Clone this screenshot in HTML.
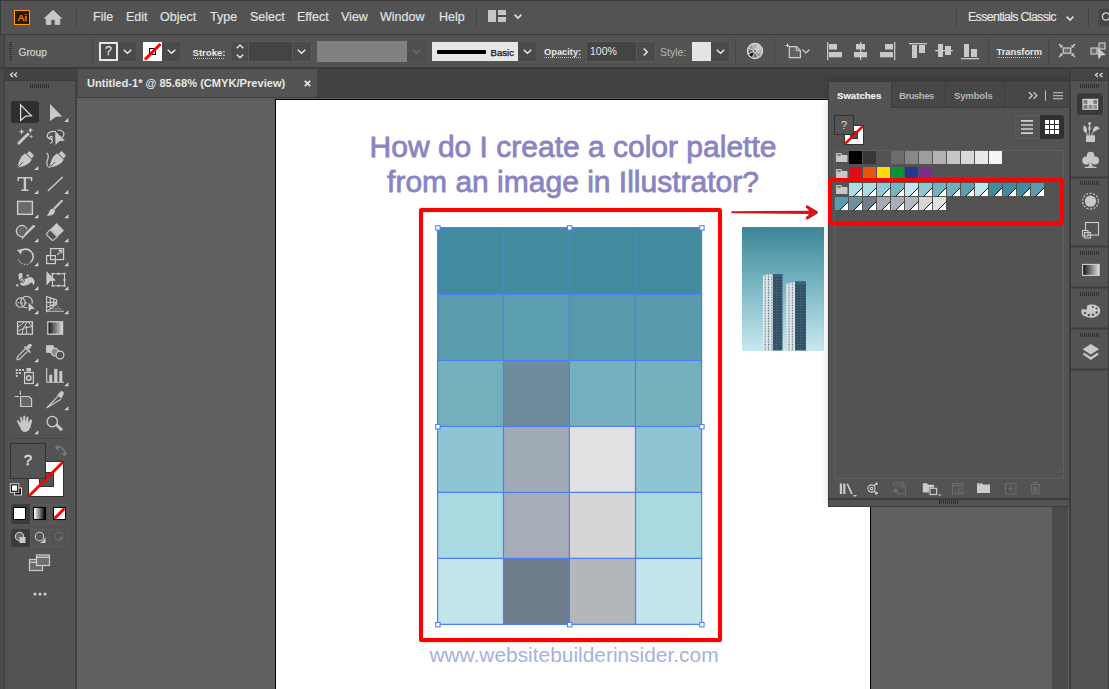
<!DOCTYPE html>
<html><head><meta charset="utf-8">
<style>
*{margin:0;padding:0;box-sizing:border-box}
html,body{width:1109px;height:689px;overflow:hidden;background:#535353;font-family:"Liberation Sans",sans-serif}
.a{position:absolute}
.mt{position:absolute;top:9px;font-size:12.5px;color:#e4e4e4;line-height:16px;white-space:nowrap;-webkit-text-stroke:0.15px #e4e4e4}
.sep{position:absolute;width:1px;background:#454545}
svg{position:absolute;overflow:visible}
</style></head><body>
<!-- frame borders -->
<div class="a" style="left:0;top:0;width:1109px;height:1px;background:#3a3a3a"></div>
<div class="a" style="left:0;top:0;width:1px;height:689px;background:#3a3a3a"></div>

<!-- MENU BAR -->
<div class="a" id="menubar" style="left:1px;top:1px;width:1108px;height:33px;background:#535353"></div>
<div class="a" style="left:0;top:34px;width:1109px;height:1px;background:#3c3c3c"></div>


<!-- menu content -->
<div class="a" style="left:14px;top:10px;width:16px;height:15px;background:#2b1600;border:1px solid #ff9a00"></div>
<div class="a" style="left:14.5px;top:10px;width:16px;height:15px;color:#ff9a00;font-size:9.8px;line-height:15.5px;text-align:center;letter-spacing:0.4px;-webkit-text-stroke:0.25px #ff9a00">Ai</div>
<svg style="left:40px;top:5px" width="26" height="24" viewBox="40 5 26 24"><path d="M53 10.3 L61.6 18.3 H59.8 V24.4 H55.1 V19.5 H50.9 V24.4 H46.2 V18.3 H44.4 Z" fill="#c8c8c8" stroke="#c8c8c8" stroke-width="0.8" stroke-linejoin="round"/></svg>
<div class="sep" style="left:76px;top:7px;height:20px"></div>
<div class="mt" style="left:93px">File</div>
<div class="mt" style="left:126px">Edit</div>
<div class="mt" style="left:160px">Object</div>
<div class="mt" style="left:210px">Type</div>
<div class="mt" style="left:250px">Select</div>
<div class="mt" style="left:297px">Effect</div>
<div class="mt" style="left:341px">View</div>
<div class="mt" style="left:380px">Window</div>
<div class="mt" style="left:439px">Help</div>
<div class="sep" style="left:476px;top:7px;height:20px"></div>
<svg style="left:488px;top:10px" width="18" height="12" viewBox="0 0 18 12"><rect x="0" y="0" width="8" height="12" fill="#c6c6c6"/><rect x="10" y="0" width="8" height="5" fill="#c6c6c6"/><rect x="10" y="7" width="8" height="5" fill="#c6c6c6"/></svg>
<svg style="left:514px;top:14px" width="8" height="5" viewBox="0 0 8 5"><path d="M0.6 0.6 L4 4 L7.4 0.6" fill="none" stroke="#e0e0e0" stroke-width="1.6"/></svg>
<div class="sep" style="left:956px;top:7px;height:20px"></div>
<div class="mt" style="left:968px;letter-spacing:-0.72px">Essentials Classic</div>
<svg style="left:1066px;top:16px" width="8" height="5" viewBox="0 0 8 5"><path d="M0.6 0.6 L4 4 L7.4 0.6" fill="none" stroke="#e0e0e0" stroke-width="1.6"/></svg>
<div class="sep" style="left:1088px;top:7px;height:20px"></div>
<div class="a" style="left:1098px;top:8px;width:20px;height:19px;background:#454545;border:1px solid #4d4d4d;border-radius:3px"></div>
<svg style="left:1101px;top:12px" width="10" height="10" viewBox="0 0 10 10"><circle cx="5" cy="4.5" r="3.6" fill="none" stroke="#d0d0d0" stroke-width="1.3"/><path d="M7.5 7 L10 9.5" stroke="#d0d0d0" stroke-width="1.5"/></svg>

<!-- CONTROL BAR -->
<div class="a" style="left:0;top:35px;width:4px;height:654px;background:#4a4a4a"></div>
<div class="a" style="left:4px;top:35px;width:1105px;height:33px;background:#535353;border-left:1px solid #3c3c3c"></div>
<div class="a" style="left:0;top:67px;width:1109px;height:2px;background:#3c3c3c"></div>


<!-- control content -->
<svg style="left:9px;top:42px" width="3" height="19" viewBox="0 0 3 19"><path d="M0 0.5h3M0 2.5h3M0 4.5h3M0 6.5h3M0 8.5h3M0 10.5h3M0 12.5h3M0 14.5h3M0 16.5h3M0 18.5h3" stroke="#333" stroke-width="1"/></svg>
<div class="a" style="left:18.5px;top:46.5px;font-size:10.2px;line-height:12px;color:#cfcfcf;-webkit-text-stroke:0.25px #cfcfcf">Group</div>
<div class="sep" style="left:92px;top:39px;height:25px;background:#474747"></div>
<!-- fill group -->
<div class="a" style="left:98px;top:41px;width:39px;height:21px;background:#4a4a4a;border:1px solid #565656;border-radius:3px"></div>
<div class="a" style="left:99px;top:42px;width:19px;height:19px;background:#4a4a4a;border:2px solid #e6e6e6"></div>
<div class="a" style="left:99px;top:42px;width:19px;height:19px;color:#dcdcdc;font-size:12.5px;line-height:19px;text-align:center;-webkit-text-stroke:0.3px #dcdcdc">?</div>
<svg style="left:123px;top:49px" width="9" height="5" viewBox="0 0 9 5"><path d="M0.7 0.7 L4.5 4.3 L8.3 0.7" fill="none" stroke="#e8e8e8" stroke-width="1.5"/></svg>
<!-- stroke group -->
<div class="a" style="left:142px;top:41px;width:39px;height:21px;background:#4a4a4a;border:1px solid #565656;border-radius:3px"></div>
<div class="a" style="left:143px;top:42px;width:19px;height:19px;background:#fff"></div>
<div class="a" style="left:149px;top:48px;width:7px;height:7px;border:1px solid #000"></div>
<svg style="left:143px;top:42px" width="19" height="19" viewBox="0 0 19 19"><path d="M2 17.5 L17.5 2" stroke="#ff0000" stroke-width="3"/></svg>
<svg style="left:167px;top:49px" width="9" height="5" viewBox="0 0 9 5"><path d="M0.7 0.7 L4.5 4.3 L8.3 0.7" fill="none" stroke="#e8e8e8" stroke-width="1.5"/></svg>
<!-- stroke label -->
<div class="a" style="left:192.5px;top:46.5px;font-size:9.6px;line-height:12px;color:#e8e8e8;font-weight:bold">Stroke:</div>
<div class="a" style="left:193px;top:58px;width:31px;height:1px;background-image:linear-gradient(90deg,#bbb 50%,transparent 50%);background-size:2px 1px"></div>
<!-- stepper -->
<div class="a" style="left:230px;top:41px;width:82px;height:21px;background:#4b4b4b;border:1px solid #5a5a5a;border-radius:3px"></div>
<div class="a" style="left:248px;top:42px;width:45px;height:19px;background:#444;border-left:1px solid #5a5a5a;border-right:1px solid #5a5a5a"></div>
<svg style="left:236px;top:44px" width="8" height="15" viewBox="0 0 8 15"><path d="M0.7 4.2 L4 0.9 L7.3 4.2 M0.7 10.5 L4 13.8 L7.3 10.5" fill="none" stroke="#e8e8e8" stroke-width="1.4"/></svg>
<svg style="left:297px;top:49px" width="9" height="5" viewBox="0 0 9 5"><path d="M0.7 0.7 L4.5 4.3 L8.3 0.7" fill="none" stroke="#e8e8e8" stroke-width="1.5"/></svg>
<!-- profile (disabled) -->
<div class="a" style="left:317px;top:41px;width:109px;height:21px;background:#4f4f4f;border-radius:2px"></div>
<div class="a" style="left:317px;top:41px;width:90px;height:21px;background:#808080"></div>
<svg style="left:412px;top:49px" width="9" height="5" viewBox="0 0 9 5"><path d="M0.7 0.7 L4.5 4.3 L8.3 0.7" fill="none" stroke="#6a6a6a" stroke-width="1.5"/></svg>
<!-- brush -->
<div class="a" style="left:432px;top:41px;width:105px;height:21px;background:#4a4a4a;border:1px solid #565656;border-radius:3px"></div>
<div class="a" style="left:432px;top:42px;width:86px;height:19px;background:#e6e6e6"></div>
<div class="a" style="left:436.7px;top:50px;width:49.5px;height:3.5px;background:#000;border-radius:1px"></div>
<div class="a" style="left:490.5px;top:46.5px;font-size:9.6px;line-height:12px;color:#111;-webkit-text-stroke:0.25px #111">Basic</div>
<svg style="left:523px;top:49px" width="9" height="5" viewBox="0 0 9 5"><path d="M0.7 0.7 L4.5 4.3 L8.3 0.7" fill="none" stroke="#e8e8e8" stroke-width="1.5"/></svg>
<!-- opacity -->
<div class="a" style="left:544px;top:45.5px;font-size:9.3px;line-height:12px;color:#e8e8e8;font-weight:bold">Opacity:</div>
<div class="a" style="left:544px;top:57px;width:37px;height:1px;background-image:linear-gradient(90deg,#bbb 50%,transparent 50%);background-size:2px 1px"></div>
<div class="a" style="left:586px;top:41px;width:70px;height:21px;background:#4b4b4b;border:1px solid #5a5a5a;border-radius:3px"></div>
<div class="a" style="left:587px;top:42px;width:50px;height:19px;background:#444;border-right:1px solid #5a5a5a"></div>
<div class="a" style="left:590px;top:45px;font-size:10.5px;line-height:12px;color:#e8e8e8">100%</div>
<svg style="left:643px;top:48px" width="5" height="8" viewBox="0 0 5 8"><path d="M0.7 0.5 L4.3 4 L0.7 7.5" fill="none" stroke="#e8e8e8" stroke-width="1.5"/></svg>
<!-- style -->
<div class="a" style="left:660px;top:46px;font-size:10.5px;line-height:12px;color:#b9b9b9">Style:</div>
<div class="a" style="left:691px;top:41px;width:39px;height:21px;background:#4a4a4a;border:1px solid #565656;border-radius:3px"></div>
<div class="a" style="left:692px;top:42px;width:19px;height:19px;background:#e4e4e4"></div>
<svg style="left:716px;top:49px" width="9" height="5" viewBox="0 0 9 5"><path d="M0.7 0.7 L4.5 4.3 L8.3 0.7" fill="none" stroke="#e8e8e8" stroke-width="1.5"/></svg>
<div class="sep" style="left:735px;top:39px;height:25px;background:#474747"></div>
<!-- recolor -->
<svg style="left:746px;top:43px" width="18" height="18" viewBox="0 0 18 18">
<path d="M9 8 L6.24 1.35 A7.2 7.2 0 0 1 11.76 1.35 Z" fill="#acacac" stroke="#d2d2d2" stroke-width="0.8"/><path d="M9 8 L11.76 1.35 A7.2 7.2 0 0 1 15.65 5.24 Z" fill="#c9c9c9" stroke="#d2d2d2" stroke-width="0.8"/><path d="M9 8 L15.65 5.24 A7.2 7.2 0 0 1 15.65 10.76 Z" fill="#b6b6b6" stroke="#d2d2d2" stroke-width="0.8"/><path d="M9 8 L15.65 10.76 A7.2 7.2 0 0 1 11.76 14.65 Z" fill="#9b9b9b" stroke="#d2d2d2" stroke-width="0.8"/><path d="M9 8 L11.76 14.65 A7.2 7.2 0 0 1 6.24 14.65 Z" fill="#707070" stroke="#d2d2d2" stroke-width="0.8"/><path d="M9 8 L6.24 14.65 A7.2 7.2 0 0 1 2.35 10.76 Z" fill="#141414" stroke="#d2d2d2" stroke-width="0.8"/><path d="M9 8 L2.35 10.76 A7.2 7.2 0 0 1 2.35 5.24 Z" fill="#6a6a6a" stroke="#d2d2d2" stroke-width="0.8"/><path d="M9 8 L2.35 5.24 A7.2 7.2 0 0 1 6.24 1.35 Z" fill="#9a9a9a" stroke="#d2d2d2" stroke-width="0.8"/>
<circle cx="9" cy="8" r="7.6" fill="none" stroke="#d6d6d6" stroke-width="1.2"/>
<circle cx="9" cy="8" r="1.8" fill="#777" stroke="#d8d8d8" stroke-width="1"/></svg>
<div class="sep" style="left:774px;top:39px;height:25px;background:#474747"></div>
<!-- doc -->
<svg style="left:785px;top:43px" width="26" height="16" viewBox="0 0 26 16">
<path d="M0.5 2.5h3.5M2.5 0.5v3.5" stroke="#cfcfcf" stroke-width="1"/>
<path d="M4.3 3.6 H11.5 L15.4 7.5 V14.6 H4.3 Z" fill="#626262" stroke="#cfcfcf" stroke-width="1.2"/>
<path d="M11.3 3.8 V7.7 H15.2" fill="none" stroke="#cfcfcf" stroke-width="1"/>
<path d="M17.5 6.5 L21 10 L24.5 6.5" fill="none" stroke="#cfcfcf" stroke-width="1.2"/></svg>
<!-- align -->
<svg style="left:826px;top:42px" width="154" height="19" viewBox="826 42 154 19" fill="#c8c8c8">
<rect x="827" y="42" width="1.3" height="18"/><rect x="829" y="44" width="8" height="5.5"/><rect x="829" y="52" width="13" height="5.3"/>
<rect x="860" y="42" width="1.3" height="18"/><rect x="856" y="44" width="9" height="5.5"/><rect x="854" y="52" width="13" height="5.3"/>
<rect x="894" y="42" width="1.3" height="18"/><rect x="885" y="44" width="8" height="5.5"/><rect x="880" y="52" width="13" height="5.3"/>
<rect x="909" y="43" width="18" height="1.3"/><rect x="912" y="45" width="5" height="13"/><rect x="919" y="45" width="6" height="8"/>
<rect x="935" y="50" width="18" height="1.3"/><rect x="938" y="44" width="5" height="13"/><rect x="945" y="46" width="6" height="9"/>
<rect x="961" y="58" width="18" height="1.3"/><rect x="964" y="44" width="5" height="13"/><rect x="971" y="49" width="6" height="8"/>
</svg>
<div class="sep" style="left:988px;top:39px;height:25px;background:#474747"></div>
<div class="a" style="left:996.5px;top:45.5px;font-size:9.3px;line-height:12px;color:#e8e8e8;font-weight:bold">Transform</div>
<div class="a" style="left:997px;top:57px;width:44px;height:1px;background-image:linear-gradient(90deg,#bbb 50%,transparent 50%);background-size:2px 1px"></div>
<div class="sep" style="left:1048px;top:39px;height:25px;background:#474747"></div>
<svg style="left:1058px;top:43px" width="18" height="15" viewBox="0 0 18 15">
<rect x="5.2" y="5" width="7.6" height="5.2" fill="#6a6a6a" stroke="#cfcfcf" stroke-width="1.2"/>
<path d="M1 1 L4 4 M17 1 L14 4 M1 14 L4 11 M17 14 L14 11" stroke="#cfcfcf" stroke-width="1.3"/>
<path d="M4.5 1.5v3h-3z M13.5 1.5v3h3z M4.5 13.5v-3h-3z M13.5 13.5v-3h3z" fill="#cfcfcf"/></svg>
<svg style="left:1090px;top:42px" width="20" height="18" viewBox="0 0 20 18">
<rect x="1" y="6" width="6" height="6" fill="#6a6a6a" stroke="#cfcfcf" stroke-width="1.1"/>
<rect x="9" y="1" width="6" height="6" fill="#6a6a6a" stroke="#cfcfcf" stroke-width="1.1"/>
<path d="M7 5 L16 13 L11.5 13.5 L8.5 17.5 Z" fill="#c8c8c8"/></svg>

<!-- LEFT TOOLS PANEL -->
<div class="a" style="left:4px;top:69px;width:73px;height:620px;background:#535353;border-left:1px solid #3c3c3c;border-right:2px solid #3f3f3f"></div>
<div class="a" style="left:5px;top:69px;width:70px;height:12px;background:#434343;border-bottom:1px solid #3c3c3c"></div>


<!-- tools content -->
<svg style="left:0;top:60px" width="80" height="560" viewBox="0 60 80 560">
<g fill="none" stroke="#d2d2d2" stroke-width="1.2">
<path d="M13 72.5 L10.5 74.7 L13 77 M17 72.5 L14.5 74.7 L17 77" stroke="#d8d8d8" stroke-width="1.4"/>
</g>
<path d="M30.5 84v4M32.5 84v4M34.5 84v4M36.5 84v4M38.5 84v4M40.5 84v4M42.5 84v4M44.5 84v4M46.5 84v4M48.5 84v4" stroke="#2f2f2f" stroke-width="1"/>
<rect x="11" y="101" width="28" height="22" rx="3" fill="#2f2f2f"/>
<!-- selection -->
<path d="M20.6 104.8 L31.4 115.8 L25.8 116.1 L20.6 120.4 Z" fill="none" stroke="#e4e4e4" stroke-width="1.2" stroke-linejoin="miter"/>
<!-- direct selection -->
<path d="M50 104 L62.3 116.6 L56 116.8 L50 121 Z" fill="#c9c9c9"/>
<g fill="#d6d6d6">
<path d="M68.3 118 V122 H64.3 Z"/>
<path d="M38.3 166 V170 H34.3 Z"/>
<path d="M38.3 190 V194 H34.3 Z"/><path d="M68.3 190 V194 H64.3 Z"/>
<path d="M38.3 214.3 V218.3 H34.3 Z"/><path d="M68.3 214.3 V218.3 H64.3 Z"/>
<path d="M38.3 238.3 V242.3 H34.3 Z"/><path d="M68.3 238.3 V242.3 H64.3 Z"/>
<path d="M38.3 262.3 V266.3 H34.3 Z"/><path d="M68.3 262.3 V266.3 H64.3 Z"/>
<path d="M38.3 286.3 V290.3 H34.3 Z"/><path d="M68.3 286.3 V290.3 H64.3 Z"/>
<path d="M38.3 310.3 V314.3 H34.3 Z"/><path d="M68.3 310.3 V314.3 H64.3 Z"/>
<path d="M38.3 358.3 V362.3 H34.3 Z"/>
<path d="M38.3 382.3 V386.3 H34.3 Z"/><path d="M68.3 382.3 V386.3 H64.3 Z"/>
<path d="M68.3 406.3 V410.3 H64.3 Z"/>
<path d="M38.3 430.3 V434.3 H34.3 Z"/>
</g>
<g fill="#c9c9c9" stroke="none">
<!-- magic wand -->
<path d="M17 143 L27.8 132.2 L29.8 134.2 L19 145 Z"/>
<path d="M21.7 128.6 L22.5 130.9 L24.8 131.7 L22.5 132.5 L21.7 134.8 L20.9 132.5 L18.6 131.7 L20.9 130.9 Z"/>
<path d="M30.5 127.4 L31.3 129.5 L33.4 130.3 L31.3 131.1 L30.5 133.2 L29.7 131.1 L27.6 130.3 L29.7 129.5 Z"/>
<path d="M31.2 134.5 L31.8 136 L33.3 136.5 L31.8 137 L31.2 138.5 L30.6 137 L29.1 136.5 L30.6 136 Z"/>
<!-- lasso arrow -->
<path d="M55.2 131 L64.9 140.7 L59.5 141 L55.5 145 Z"/>
<!-- pen -->
<g transform="translate(25.3 159.8) rotate(45)"><rect x="-3.3" y="-9.2" width="6.6" height="3.8" rx="0.9"/><path d="M-4.6 -4.6 H4.6 Q6.4 2.5 0 10.8 Q-6.4 2.5 -4.6 -4.6 Z"/><path d="M0 10.5 V3" stroke="#535353" stroke-width="0.9"/></g>
<g transform="translate(57.3 159.8) rotate(45)"><rect x="-3.3" y="-9.2" width="6.6" height="3.8" rx="0.9"/><path d="M-4.6 -4.6 H4.6 Q6.4 2.5 0 10.8 Q-6.4 2.5 -4.6 -4.6 Z"/><path d="M0 10.5 V3" stroke="#535353" stroke-width="0.9"/></g>
<!-- T -->
<path d="M17.5 177 H32.3 V181 H30.8 V178.6 H26.1 V189.4 H28.5 V191 H21.3 V189.4 H23.7 V178.6 H19 V181 H17.5 Z"/>
<!-- paintbrush -->
<path d="M53.3 208 L61.2 200 Q63.5 199 62.6 201.4 L55 209.6 Z"/>
<path d="M53.5 208.5 L55 210 Q55.5 214 50.5 215.6 L46.8 216 Q49 213 49.5 211 Q50.5 208 53.5 208.5 Z"/>
<!-- eraser -->
<path d="M56.6 223 L64 230.4 L57.8 236.6 L50.4 229.2 Z"/>
<!-- shaper pencil -->
<path d="M21.5 240 L22.5 235.5 L32.8 225.2 Q34.5 224.5 35.3 226.3 L25 236.6 Z"/>
<!-- width tool blob -->
<path d="M18.5 276 Q18 272.5 21.5 273 Q23.5 274 22 277 Q25 280 29 277 Q33 276.5 34.6 281 Q34.5 285 33 285 Q32.5 281.5 30.5 283 Q27 286.5 22 285.5 Q19.5 284 20 281 Q18.5 279 18.5 276 Z"/>
<path d="M17.5 285 L28 275.5" stroke="#535353" stroke-width="0.9"/>
<circle cx="22.3" cy="280.4" r="2.1" fill="none" stroke="#535353" stroke-width="0.9"/>
<rect x="16" y="284" width="2.8" height="2.8" fill="#c9c9c9" stroke="#535353" stroke-width="0.5"/>
<circle cx="27.8" cy="275.6" r="1.5" fill="#c9c9c9" stroke="#535353" stroke-width="0.6"/>
<!-- free transform arrow -->
<path d="M46.4 271.3 L56 280.5 L50.5 281 L46.4 285.5 Z"/>
<!-- eyedropper bulb -->
<path d="M26 347 L29 344 Q31.5 343 32 345.5 L29 349.5 Z"/>
<path d="M25 346 L31 352 L29.8 353.2 L23.8 347.2 Z"/>
<!-- blend square -->
<rect x="46.1" y="345.2" width="7.7" height="7.7"/>
<!-- symbol sprayer dots -->
<rect x="15.8" y="369" width="2" height="2"/><rect x="18.9" y="369" width="2" height="2"/><rect x="22" y="369" width="2" height="2"/>
<rect x="15.8" y="372" width="2" height="2"/><rect x="18.9" y="372" width="2" height="2"/>
<rect x="15.8" y="375" width="2" height="2"/>
<rect x="26.5" y="368" width="4.5" height="3.5"/>
<!-- graph -->
<rect x="49.2" y="374.8" width="3" height="7.4"/><rect x="54.2" y="368.9" width="3.2" height="13.3"/><rect x="59.3" y="371" width="3" height="11.2"/>
<!-- slice cap -->
<path d="M57 395.5 L60.6 391.4 Q62 390.6 63.5 392 Q64.3 393.5 63.3 394.7 L61.5 398.5 Z"/>
<!-- hand -->
<path d="M20 427 L17 421.5 Q16.6 420 18.2 420.3 L21 423.5 L20 417.5 Q20.5 416 21.7 417.3 L23 422 L23.3 416 Q24.3 415 25.2 416 L25.6 422 L26.8 416.8 Q27.8 416 28.5 417.2 L28.3 423 L30.3 419.6 Q31.8 419 32.3 420.3 L30.5 427 Q29 431.8 25 432 Q21.5 432 20 427 Z"/>
<!-- zoom handle -->
<path d="M55.2 425.6 L57.3 423.5 L63 429.2 L60.9 431.3 Z"/>
</g>
<g fill="none" stroke="#cdcdcd" stroke-width="1.2">
<!-- lasso loop -->
<path d="M56 131.5 Q48 131 47.3 135.5 Q47 138.5 51 139 Q53 140 52 142 Q51 143.5 50 143.5"/>
<path d="M57.5 130 Q63.5 130 64 134 Q64 136.5 62 137.5" />
<circle cx="51" cy="137.6" r="1.2" />
<!-- curvature tail -->
<path d="M46.5 153 Q49 154.5 48 158.5 Q46 163 47.5 166 Q48.5 167.5 50.5 167"/>
<!-- line -->
<path d="M47.8 191 L62.7 177" stroke-width="1.4"/>
<!-- rect -->
<rect x="17.6" y="201.4" width="14.8" height="12.9" fill="#6a6a6a" stroke-width="1.4"/>
<!-- shaper circle -->
<path d="M23.5 236.4 A5.6 5.6 0 1 1 27.2 229" fill="#666" stroke-width="1.2"/>
<!-- eraser outline -->
<path d="M50.1 229.7 L57.3 236.9 L53.3 240.1 Q52.6 240.6 51.8 240 L46.8 235 Q46.3 234.2 46.8 233.4 Z" stroke-width="1.1"/>
<!-- rotate -->
<path d="M20.5 251 A7.3 7.3 0 1 1 30.5 262.5" stroke-width="1.6"/><path d="M17 250 L22.5 249 L21 254.5 Z" fill="#cdcdcd" stroke="none"/>
<path d="M18.5 259.5 A7.3 7.3 0 0 0 29.8 263" stroke-dasharray="1 1.6" stroke-width="1.4"/>
<!-- scale -->
<rect x="50.6" y="248.6" width="13" height="11" />
<rect x="46.6" y="255.6" width="8.8" height="8" />
<path d="M57.3 254.8 L61.8 250.3 M58.5 250.3 H61.8 V253.6"/>
<!-- free transform dotted rect -->
<rect x="52.5" y="273.8" width="12" height="12" stroke-width="1"/><g fill="#cdcdcd" stroke="none"><rect x="51.5" y="272.8" width="2" height="2"/><rect x="57.5" y="272.8" width="2" height="2"/><rect x="63.5" y="272.8" width="2" height="2"/><rect x="63.5" y="278.8" width="2" height="2"/><rect x="51.5" y="284.8" width="2" height="2"/><rect x="57.5" y="284.8" width="2" height="2"/><rect x="63.5" y="284.8" width="2" height="2"/></g>
<!-- shape builder -->
<circle cx="20.6" cy="302.6" r="4.7" stroke-width="1.1"/>
<circle cx="26.6" cy="302" r="5.7" stroke-width="1.1"/>
<path d="M17.6 302.8 H28.5" stroke-dasharray="1 1.1" stroke-width="1.2"/>
<path d="M28 301.2 L36.5 309.2 L31.8 309.5 L28 313 Z" fill="#c9c9c9" stroke="#535353" stroke-width="1.2"/>
<!-- perspective -->
<path d="M46.6 296.5 V311.6 L56.6 304.3 V300 Z M50.2 297.9 V309 M53.6 299.1 V306.6 M46.6 302.5 L56.6 302.1 M46.6 307 L56.6 303.3" stroke-width="1.1"/>
<path d="M47.5 311.3 H63.9" stroke="#b0b0b0" stroke-width="1.2"/>
<path d="M52 308.8 H61.5" stroke="#8c8c8c" stroke-width="1.2"/>
<path d="M56.5 306.4 H59.5" stroke="#7c7c7c" stroke-width="1.2"/>
<!-- gradient tool -->
<defs><linearGradient id="gt" x1="0" x2="1"><stop offset="0" stop-color="#111"/><stop offset="1" stop-color="#ddd"/></linearGradient></defs>
<rect x="47.8" y="321.8" width="14.8" height="12.4" fill="url(#gt)" stroke-width="1.3"/>
<!-- mesh -->
<rect x="17.6" y="321.8" width="14.8" height="12.4" stroke-width="1.3"/>
<path d="M17.6 327 Q22 325 24 322 M18 331 Q24 327 32.3 326.5 M22 334 Q22 329 27 322 M27 334 Q25.5 329.5 26.5 326 M28.5 322 Q30 325 32.3 326" stroke-width="1.0"/>
<!-- eyedropper tube -->
<path d="M25.2 349 L18.5 355.7 Q16.3 358.5 17.2 359.3 Q18 360.5 20.8 358 L27.5 351.3" stroke-width="1.2"/>
<!-- blend -->
<path d="M53 348.4 H56.2 L58.7 350.9 V353.8 L56.5 356 H53.5 L51.3 353.8 V350.4 Z" fill="#8a8a8a" stroke-width="1.1"/>
<circle cx="60" cy="355" r="3.9" fill="#535353" stroke-width="1.2"/>
<!-- symbol sprayer bottle -->
<rect x="24.6" y="372.5" width="8.8" height="11" stroke-width="1.2"/>
<circle cx="28.8" cy="378" r="2.2" stroke-width="1.5"/>
<!-- graph axis -->
<path d="M46.7 368 V382.3 H64" stroke-width="1.1"/>
<!-- artboard -->
<path d="M14.8 396.5 H19 M20.4 390.8 V395" stroke-width="1.1"/>
<path d="M20.6 396.5 H29 L31.6 399 V406.5 H20.6 Z" fill="#666" stroke-width="1.2"/>
<!-- slice -->
<path d="M57.8 396.3 L46.8 407.8 L61 399.2" stroke-width="1.2" stroke-linejoin="round"/>
<!-- zoom -->
<circle cx="52.3" cy="421.6" r="5.2" stroke-width="1.3"/>
</g>
<!-- separator -->
<rect x="10" y="438" width="60" height="1" fill="#494949"/>
</svg>


<!-- fill/stroke -->
<div class="a" style="left:28px;top:461px;width:36px;height:36px;background:#fff;border:1px solid #333"></div>
<div class="a" style="left:39px;top:472px;width:15px;height:15px;background:#535353;border:1px solid #333"></div>
<svg style="left:28px;top:461px" width="36" height="36" viewBox="0 0 36 36"><path d="M1.3 34.7 L34.7 1.3" stroke="#ff0000" stroke-width="2.7"/></svg>
<div class="a" style="left:10px;top:443px;width:36px;height:36px;background:#535353;border:1px solid #333"></div>
<div class="a" style="left:10px;top:442px;width:36px;height:36px;color:#e0e0e0;font-size:15px;line-height:36px;text-align:center;-webkit-text-stroke:0.4px #e0e0e0">?</div>
<svg style="left:54px;top:443px" width="14" height="14" viewBox="0 0 14 14"><path d="M2 4.5 Q6.5 3 9.5 6.5 Q11.5 9 10.5 11" fill="none" stroke="#7a7a7a" stroke-width="1.6"/><path d="M1 4.5 L4.5 1 L4.5 8 Z M7.5 10 L13.5 10 L10.5 13.5 Z" fill="#7a7a7a"/></svg>
<svg style="left:8px;top:482px" width="16" height="16" viewBox="8 482 16 16">
<rect x="14.5" y="488" width="7" height="7" fill="#000" stroke="#e0e0e0" stroke-width="1"/>
<rect x="11.3" y="484.8" width="6.5" height="6.5" fill="#fff" stroke="#000" stroke-width="1.2"/>
<rect x="10.3" y="483.8" width="8.5" height="8.5" fill="none" stroke="#e0e0e0" stroke-width="0.9"/>
</svg>
<!-- color modes -->
<div class="a" style="left:11px;top:504px;width:58px;height:20px;border:1px solid #5c5c5c;border-radius:3px;background:#535353"></div>
<div class="a" style="left:11px;top:504px;width:19px;height:20px;background:#3b3b3b;border-radius:3px 0 0 3px"></div>
<div class="a" style="left:30px;top:505px;width:1px;height:18px;background:#5c5c5c"></div>
<div class="a" style="left:49px;top:505px;width:1px;height:18px;background:#5c5c5c"></div>
<div class="a" style="left:13px;top:507px;width:13px;height:13px;background:#fff;border:1.5px solid #000"></div>
<div class="a" style="left:33px;top:507px;width:13px;height:13px;background:linear-gradient(90deg,#fff,#000);border:1.5px solid #000"></div>
<div class="a" style="left:53px;top:507px;width:13px;height:13px;background:#fff;border:1.5px solid #000;overflow:hidden"></div>
<svg style="left:53px;top:507px" width="13" height="13" viewBox="0 0 13 13"><path d="M1.5 11.5 L11.5 1.5" stroke="#f00" stroke-width="3"/></svg>
<!-- draw modes -->
<div class="a" style="left:11px;top:529px;width:58px;height:18px;border:1px solid #5c5c5c;border-radius:3px;background:#535353"></div>
<div class="a" style="left:11px;top:529px;width:19px;height:18px;background:#3b3b3b;border-radius:3px 0 0 3px"></div>
<div class="a" style="left:30px;top:530px;width:1px;height:16px;background:#5c5c5c"></div>
<div class="a" style="left:49px;top:530px;width:1px;height:16px;background:#5c5c5c"></div>
<svg style="left:0;top:525px" width="80" height="25" viewBox="0 525 80 25">
<circle cx="19.5" cy="536.5" r="4.2" fill="#6a6a6a" stroke="#cdcdcd" stroke-width="1.1"/><rect x="19.5" y="537" width="6" height="6" fill="#c9c9c9"/>
<circle cx="39.5" cy="536.5" r="4.2" fill="#535353" stroke="#cdcdcd" stroke-width="1.1"/><path d="M45.5 537 V543 H39.5 Q43.5 541.5 45.5 537 Z" fill="#c9c9c9"/>
<circle cx="59" cy="536.5" r="4" fill="none" stroke="#6a6a6a" stroke-width="1.1"/><path d="M59.2 536.7 H63 Q62.5 540 59.2 540.3 Z" fill="#6a6a6a"/>
</svg>
<!-- screen mode -->
<svg style="left:28px;top:554px" width="24" height="18" viewBox="0 0 24 18">
<rect x="1.5" y="5.5" width="13" height="11" fill="#6a6a6a" stroke="#cdcdcd" stroke-width="1.2"/>
<path d="M1.5 8.3 H14.5" stroke="#cdcdcd" stroke-width="1.2"/>
<rect x="8.5" y="1" width="13" height="10.5" fill="#6f6f6f" stroke="#cdcdcd" stroke-width="1.2"/>
<path d="M8.5 3.3 H21.5" stroke="#cdcdcd" stroke-width="1.3"/>
</svg>
<svg style="left:33px;top:592px" width="14" height="4" viewBox="0 0 14 4"><circle cx="2" cy="2" r="1.5" fill="#cdcdcd"/><circle cx="7" cy="2" r="1.5" fill="#cdcdcd"/><circle cx="12" cy="2" r="1.5" fill="#cdcdcd"/></svg>

<!-- TAB BAR -->
<div class="a" style="left:76px;top:69px;width:993px;height:28px;background:#434343"></div>
<div class="a" style="left:78px;top:69px;width:239px;height:28px;background:#535353"></div>


<div class="a" style="left:87px;top:77px;font-size:11.1px;line-height:13px;font-weight:bold;color:#e8e8e8;white-space:nowrap">Untitled-1* @ 85.68% (CMYK/Preview)</div>
<svg style="left:304px;top:80px" width="7" height="7" viewBox="0 0 7 7"><path d="M0.8 0.8 L6.2 6.2 M6.2 0.8 L0.8 6.2" stroke="#e8e8e8" stroke-width="1.7"/></svg>

<!-- CANVAS -->
<div class="a" style="left:77px;top:97px;width:992px;height:592px;background:#606060;border-top:1px solid #3c3c3c"></div>
<div class="a" style="left:1052px;top:97px;width:16px;height:592px;background:#4a4a4a"></div>

<!-- ARTBOARD -->
<div class="a" style="left:275px;top:99px;width:596px;height:600px;background:#fff;border:1px solid #000"></div>


<!-- ARTBOARD CONTENT -->
<div class="a" style="left:276px;top:128.5px;width:594px;text-align:center;color:#8a84c2;font-size:30px;line-height:35px;white-space:nowrap;-webkit-text-stroke:0.8px #8a84c2">How do I create a color palette<br>from an image in Illustrator?</div>
<div class="a" style="left:419.3px;top:208.3px;width:303.2px;height:434px;border:4.35px solid #ff0000;border-radius:2.5px;box-shadow:0 0.5px 2px rgba(0,0,0,0.18), inset 0 0.5px 2px rgba(0,0,0,0.15)"></div>
<svg style="left:0;top:0" width="1109" height="689" viewBox="0 0 1109 689">
<rect x="437.6" y="227.6" width="65.9" height="66.8" fill="#428a9e"/><rect x="503.5" y="227.6" width="65.9" height="66.8" fill="#428a9e"/><rect x="569.4" y="227.6" width="66.1" height="66.8" fill="#428a9e"/><rect x="635.5" y="227.6" width="66.1" height="66.8" fill="#428a9e"/><rect x="437.6" y="294.4" width="65.9" height="66.0" fill="#5a9cad"/><rect x="503.5" y="294.4" width="65.9" height="66.0" fill="#5b9fb0"/><rect x="569.4" y="294.4" width="66.1" height="66.0" fill="#5899ab"/><rect x="635.5" y="294.4" width="66.1" height="66.0" fill="#599aac"/><rect x="437.6" y="360.4" width="65.9" height="66.0" fill="#74b0bc"/><rect x="503.5" y="360.4" width="65.9" height="66.0" fill="#6e8c9b"/><rect x="569.4" y="360.4" width="66.1" height="66.0" fill="#74b0bd"/><rect x="635.5" y="360.4" width="66.1" height="66.0" fill="#75b0bd"/><rect x="437.6" y="426.4" width="65.9" height="66.0" fill="#8fc5d2"/><rect x="503.5" y="426.4" width="65.9" height="66.0" fill="#a0abb5"/><rect x="569.4" y="426.4" width="66.1" height="66.0" fill="#e1e0e2"/><rect x="635.5" y="426.4" width="66.1" height="66.0" fill="#8fc5d2"/><rect x="437.6" y="492.4" width="65.9" height="66.0" fill="#a9d9e1"/><rect x="503.5" y="492.4" width="65.9" height="66.0" fill="#a7adb8"/><rect x="569.4" y="492.4" width="66.1" height="66.0" fill="#d7d6d7"/><rect x="635.5" y="492.4" width="66.1" height="66.0" fill="#a9d9e1"/><rect x="437.6" y="558.4" width="65.9" height="66.0" fill="#c2e4eb"/><rect x="503.5" y="558.4" width="65.9" height="66.0" fill="#6f7c8c"/><rect x="569.4" y="558.4" width="66.1" height="66.0" fill="#b3b7ba"/><rect x="635.5" y="558.4" width="66.1" height="66.0" fill="#c2e4eb"/>
<path d="M437.6 227.6 V624.4 M503.5 227.6 V624.4 M569.4 227.6 V624.4 M635.5 227.6 V624.4 M701.6 227.6 V624.4 M437.6 227.6 H701.6 M437.6 294.4 H701.6 M437.6 360.4 H701.6 M437.6 426.4 H701.6 M437.6 492.4 H701.6 M437.6 558.4 H701.6 M437.6 624.4 H701.6" stroke="#4f7dfb" stroke-width="1.2" fill="none"/>
<rect x="435.70" y="225.70" width="4.4" height="4.4" fill="#fff" stroke="#4f7dfb" stroke-width="1.05"/><rect x="567.50" y="225.70" width="4.4" height="4.4" fill="#fff" stroke="#4f7dfb" stroke-width="1.05"/><rect x="699.70" y="225.70" width="4.4" height="4.4" fill="#fff" stroke="#4f7dfb" stroke-width="1.05"/><rect x="435.70" y="424.50" width="4.4" height="4.4" fill="#fff" stroke="#4f7dfb" stroke-width="1.05"/><rect x="699.70" y="424.50" width="4.4" height="4.4" fill="#fff" stroke="#4f7dfb" stroke-width="1.05"/><rect x="435.70" y="622.50" width="4.4" height="4.4" fill="#fff" stroke="#4f7dfb" stroke-width="1.05"/><rect x="567.50" y="622.50" width="4.4" height="4.4" fill="#fff" stroke="#4f7dfb" stroke-width="1.05"/><rect x="699.70" y="622.50" width="4.4" height="4.4" fill="#fff" stroke="#4f7dfb" stroke-width="1.05"/>
<!-- arrow -->
<path d="M731.5 211.3 L810 210.8 L810 214 L731.5 213.3 Z" fill="#d6131a"/>
<path d="M807.3 207 L816.3 212.4 L807.3 217.8" fill="none" stroke="#d6131a" stroke-width="3.2" stroke-linecap="round" stroke-linejoin="round"/>
<path d="M808.5 208.5 L816.5 212.4 L808.5 216.3 Z" fill="#d6131a"/>
</svg>
<div class="a" style="left:276px;top:643px;width:594px;text-align:center;color:#a8b0de;font-size:20.9px;line-height:24px;white-space:nowrap;padding-left:2px">www.websitebuilderinsider.com</div>


<!-- photo -->
<svg style="left:742px;top:227px" width="82" height="124" viewBox="742 227 82 124">
<defs>
<linearGradient id="sky" x1="0" y1="0" x2="0" y2="1"><stop offset="0" stop-color="#3d8597"/><stop offset="0.45" stop-color="#76b4c1"/><stop offset="1" stop-color="#c9e8ee"/></linearGradient>
<pattern id="win1" x="763" y="0" width="3.4" height="2.6" patternUnits="userSpaceOnUse"><rect width="3.4" height="2.6" fill="#eef4f5"/><rect x="1.5" y="0.5" width="1.3" height="1.6" fill="#4d6b7b"/><rect x="0" y="2.1" width="3.4" height="0.5" fill="#c9d6da"/></pattern>
<pattern id="win2" x="0" y="0" width="2.4" height="2.6" patternUnits="userSpaceOnUse"><rect width="2.4" height="2.6" fill="#2b4a5d"/><rect x="0.5" y="0.6" width="1.2" height="1.3" fill="#55788a"/></pattern>
</defs>
<rect x="742" y="227" width="82" height="124" fill="url(#sky)"/>
<path d="M763 276 L766 274.5 L773 274 L773 350.5 L763 350.5 Z" fill="url(#win1)"/>
<rect x="773" y="274" width="9.5" height="76.5" fill="url(#win2)"/>
<rect x="773" y="274" width="9.5" height="3" fill="#3a6275"/>
<path d="M786 284 L790 283 L795 282 L795 350.5 L786 350.5 Z" fill="url(#win1)"/>
<rect x="795" y="281.5" width="11" height="69" fill="url(#win2)"/>
<rect x="795" y="281.5" width="11" height="3.5" fill="#3a6275"/>
</svg>

<!-- RIGHT DOCK -->
<div class="a" style="left:1069px;top:69px;width:40px;height:620px;background:#535353;border-left:2px solid #3c3c3c;border-right:1px solid #3c3c3c"></div>
<div class="a" style="left:1071px;top:69px;width:37px;height:12px;background:#434343;border-bottom:1px solid #3c3c3c"></div>

<!-- SWATCHES PANEL -->
<div class="a" style="left:828px;top:78px;width:243px;height:429px;background:#535353;border:1px solid #3c3c3c;border-top:4px solid #3c3c3c;border-right:2px solid #3c3c3c;border-bottom:1px solid #3c3c3c;box-shadow:-3px -2px 4px rgba(0,0,0,0.07)"></div>


<!-- swatches panel content -->
<div class="a" style="left:829px;top:82px;width:240px;height:26px;background:#474747;border-bottom:1px solid #3e3e3e"></div>
<div class="a" style="left:829px;top:82px;width:62px;height:27px;background:#535353"></div>
<div class="a" style="left:945px;top:82px;width:1px;height:26px;background:#3c3c3c"></div>
<div class="a" style="left:1004px;top:82px;width:1px;height:26px;background:#3c3c3c"></div>
<div class="a" style="left:891px;top:82px;width:1px;height:26px;background:#3c3c3c"></div>
<div class="a" style="left:837px;top:90px;font-size:9.6px;line-height:12px;font-weight:bold;color:#f0f0f0;-webkit-text-stroke:0.15px #f0f0f0">Swatches</div>
<div class="a" style="left:899px;top:90px;font-size:9.6px;line-height:12px;font-weight:bold;color:#b4b4b4;letter-spacing:-0.5px">Brushes</div>
<div class="a" style="left:954px;top:90px;font-size:9.6px;line-height:12px;font-weight:bold;color:#b4b4b4;letter-spacing:-0.2px">Symbols</div>
<svg style="left:1028px;top:91px" width="36" height="11" viewBox="1028 91 36 11">
<path d="M1029 92.3 L1032.3 95.5 L1029 98.7 M1033.5 92.3 L1036.8 95.5 L1033.5 98.7" fill="none" stroke="#d0d0d0" stroke-width="1.2"/>
<path d="M1045.5 90.5 V100.7" stroke="#c0c0c0" stroke-width="1"/>
<path d="M1053 92.7 H1063 M1053 95.7 H1063 M1053 98.7 H1063" stroke="#d0d0d0" stroke-width="1.1"/>
</svg>
<!-- mini fill/stroke -->
<div class="a" style="left:844px;top:125px;width:20px;height:20px;background:#fff;border:1px solid #333"></div>
<div class="a" style="left:850px;top:131px;width:8px;height:8px;background:#535353;border:1px solid #333"></div>
<svg style="left:844px;top:125px" width="20" height="20" viewBox="0 0 20 20"><path d="M1.3 18.7 L18.7 1.3" stroke="#f00" stroke-width="2.6"/></svg>
<div class="a" style="left:834px;top:115px;width:20px;height:20px;background:#535353;border:1px solid #333"></div>
<div class="a" style="left:834px;top:115px;width:20px;height:20px;font-size:11.5px;line-height:20px;text-align:center;color:#dedede">?</div>
<!-- view buttons -->
<div class="a" style="left:1015px;top:115px;width:49px;height:24px;background:#535353;border:1px solid #5d5d5d;border-radius:3px"></div>
<div class="a" style="left:1040px;top:115px;width:24px;height:24px;background:#2f2f2f;border-radius:0 3px 3px 0"></div>
<svg style="left:1020px;top:119px" width="42" height="16" viewBox="1020 119 42 16">
<path d="M1021 120.9 H1033 M1021 125 H1033 M1021 129 H1033 M1021 133.1 H1033" stroke="#cfcfcf" stroke-width="1.7"/>
<g fill="#fff"><rect x="1045" y="120" width="4" height="4"/><rect x="1050" y="120" width="4" height="4"/><rect x="1055" y="120" width="4" height="4"/>
<rect x="1045" y="125" width="4" height="4"/><rect x="1050" y="125" width="4" height="4"/><rect x="1055" y="125" width="4" height="4"/>
<rect x="1045" y="130" width="4" height="4"/><rect x="1050" y="130" width="4" height="4"/><rect x="1055" y="130" width="4" height="4"/></g>
</svg>
<!-- list box -->
<div class="a" style="left:834px;top:150px;width:230px;height:329px;border:1px solid #5f5f5f"></div>
<svg style="left:0;top:0" width="1109" height="689" viewBox="0 0 1109 689">
<path d="M1050.5 158 L1055 153.5 L1059.5 158" fill="none" stroke="#5e5e5e" stroke-width="1"/>
<path d="M1053.5 468.5 L1058 473 L1062.5 468.5" fill="none" stroke="#5e5e5e" stroke-width="1"/>
<path d="M836 154.0 Q836 153.0 837 153.0 H841 L842.5 155.0 H846.8 Q847.5 155.0 847.5 156.0 V162.0 H836 Z" fill="#c8c8c8"/><rect x="837.3" y="154.2" width="3.6" height="1.4" fill="#5a5a5a"/><path d="M836 170.0 Q836 169.0 837 169.0 H841 L842.5 171.0 H846.8 Q847.5 171.0 847.5 172.0 V178.0 H836 Z" fill="#c8c8c8"/><rect x="837.3" y="170.2" width="3.6" height="1.4" fill="#5a5a5a"/><path d="M836 186.0 Q836 185.0 837 185.0 H841 L842.5 187.0 H846.8 Q847.5 187.0 847.5 188.0 V194.0 H836 Z" fill="#c8c8c8"/><rect x="837.3" y="186.2" width="3.6" height="1.4" fill="#5a5a5a"/>
<rect x="849" y="151" width="13" height="13" fill="#000000"/><rect x="863" y="151" width="13" height="13" fill="#373737"/><rect x="877" y="151" width="13" height="13" fill="#535353"/><rect x="891" y="151" width="13" height="13" fill="#6c6c6c"/><rect x="905" y="151" width="13" height="13" fill="#878787"/><rect x="919" y="151" width="13" height="13" fill="#9d9d9d"/><rect x="933" y="151" width="13" height="13" fill="#b2b2b2"/><rect x="947" y="151" width="13" height="13" fill="#c7c7c7"/><rect x="961" y="151" width="13" height="13" fill="#d9d9d9"/><rect x="975" y="151" width="13" height="13" fill="#e9e9e9"/><rect x="989" y="151" width="13" height="13" fill="#f4f4f4"/><rect x="849" y="167" width="13" height="13" fill="#e20b17"/><rect x="863" y="167" width="13" height="13" fill="#e6550f"/><rect x="877" y="167" width="13" height="13" fill="#fedb00"/><rect x="891" y="167" width="13" height="13" fill="#009739"/><rect x="905" y="167" width="13" height="13" fill="#213a8d"/><rect x="919" y="167" width="13" height="13" fill="#7b2e8c"/><rect x="849" y="183" width="13" height="13" fill="#aadde4"/><path d="M862.0 188.0 V196.0 H854.0 Z" fill="#fff"/><path d="M853.6 196.4 L862.4 187.6" stroke="#000" stroke-width="0.9"/><rect x="863" y="183" width="13" height="13" fill="#a9dce3"/><path d="M876.0 188.0 V196.0 H868.0 Z" fill="#fff"/><path d="M867.6 196.4 L876.4 187.6" stroke="#000" stroke-width="0.9"/><rect x="877" y="183" width="13" height="13" fill="#90c8d3"/><path d="M890.0 188.0 V196.0 H882.0 Z" fill="#fff"/><path d="M881.6 196.4 L890.4 187.6" stroke="#000" stroke-width="0.9"/><rect x="891" y="183" width="13" height="13" fill="#77b2bf"/><path d="M904.0 188.0 V196.0 H896.0 Z" fill="#fff"/><path d="M895.6 196.4 L904.4 187.6" stroke="#000" stroke-width="0.9"/><rect x="905" y="183" width="13" height="13" fill="#c2e6ec"/><path d="M918.0 188.0 V196.0 H910.0 Z" fill="#fff"/><path d="M909.6 196.4 L918.4 187.6" stroke="#000" stroke-width="0.9"/><rect x="919" y="183" width="13" height="13" fill="#8dc7d2"/><path d="M932.0 188.0 V196.0 H924.0 Z" fill="#fff"/><path d="M923.6 196.4 L932.4 187.6" stroke="#000" stroke-width="0.9"/><rect x="933" y="183" width="13" height="13" fill="#75b2bf"/><path d="M946.0 188.0 V196.0 H938.0 Z" fill="#fff"/><path d="M937.6 196.4 L946.4 187.6" stroke="#000" stroke-width="0.9"/><rect x="947" y="183" width="13" height="13" fill="#72aebb"/><path d="M960.0 188.0 V196.0 H952.0 Z" fill="#fff"/><path d="M951.6 196.4 L960.4 187.6" stroke="#000" stroke-width="0.9"/><rect x="961" y="183" width="13" height="13" fill="#5a9dae"/><path d="M974.0 188.0 V196.0 H966.0 Z" fill="#fff"/><path d="M965.6 196.4 L974.4 187.6" stroke="#000" stroke-width="0.9"/><rect x="975" y="183" width="13" height="13" fill="#c0e5eb"/><path d="M988.0 188.0 V196.0 H980.0 Z" fill="#fff"/><path d="M979.6 196.4 L988.4 187.6" stroke="#000" stroke-width="0.9"/><rect x="989" y="183" width="13" height="13" fill="#418a9e"/><path d="M1002.0 188.0 V196.0 H994.0 Z" fill="#fff"/><path d="M993.6 196.4 L1002.4 187.6" stroke="#000" stroke-width="0.9"/><rect x="1003" y="183" width="13" height="13" fill="#438a9e"/><path d="M1016.0 188.0 V196.0 H1008.0 Z" fill="#fff"/><path d="M1007.6 196.4 L1016.4 187.6" stroke="#000" stroke-width="0.9"/><rect x="1017" y="183" width="13" height="13" fill="#438a9e"/><path d="M1030.0 188.0 V196.0 H1022.0 Z" fill="#fff"/><path d="M1021.6 196.4 L1030.4 187.6" stroke="#000" stroke-width="0.9"/><rect x="1031" y="183" width="13" height="13" fill="#5a9cad"/><path d="M1044.0 188.0 V196.0 H1036.0 Z" fill="#fff"/><path d="M1035.6 196.4 L1044.4 187.6" stroke="#000" stroke-width="0.9"/><rect x="835" y="197" width="13" height="13" fill="#599cae"/><path d="M848.0 202.0 V210.0 H840.0 Z" fill="#fff"/><path d="M839.6 210.4 L848.4 201.6" stroke="#000" stroke-width="0.9"/><rect x="849" y="197" width="13" height="13" fill="#6d8f9e"/><path d="M862.0 202.0 V210.0 H854.0 Z" fill="#fff"/><path d="M853.6 210.4 L862.4 201.6" stroke="#000" stroke-width="0.9"/><rect x="863" y="197" width="13" height="13" fill="#6f7d8d"/><path d="M876.0 202.0 V210.0 H868.0 Z" fill="#fff"/><path d="M867.6 210.4 L876.4 201.6" stroke="#000" stroke-width="0.9"/><rect x="877" y="197" width="13" height="13" fill="#a1abb6"/><path d="M890.0 202.0 V210.0 H882.0 Z" fill="#fff"/><path d="M881.6 210.4 L890.4 201.6" stroke="#000" stroke-width="0.9"/><rect x="891" y="197" width="13" height="13" fill="#a7aeb8"/><path d="M904.0 202.0 V210.0 H896.0 Z" fill="#fff"/><path d="M895.6 210.4 L904.4 201.6" stroke="#000" stroke-width="0.9"/><rect x="905" y="197" width="13" height="13" fill="#b3b8bb"/><path d="M918.0 202.0 V210.0 H910.0 Z" fill="#fff"/><path d="M909.6 210.4 L918.4 201.6" stroke="#000" stroke-width="0.9"/><rect x="919" y="197" width="13" height="13" fill="#d6d6d6"/><path d="M932.0 202.0 V210.0 H924.0 Z" fill="#fff"/><path d="M923.6 210.4 L932.4 201.6" stroke="#000" stroke-width="0.9"/><rect x="933" y="197" width="13" height="13" fill="#e0e0e2"/><path d="M946.0 202.0 V210.0 H938.0 Z" fill="#fff"/><path d="M937.6 210.4 L946.4 201.6" stroke="#000" stroke-width="0.9"/>
</svg>


<!-- dock content -->
<svg style="left:1066px;top:68px" width="43" height="621" viewBox="1066 68 43 621">
<rect x="1071" y="69" width="37" height="12" fill="#454545"/>
<rect x="1071" y="80" width="37" height="1" fill="#3c3c3c"/>
<path d="M1098 73 L1095.5 75 L1098 77 M1102.5 73 L1100 75 L1102.5 77" fill="none" stroke="#dcdcdc" stroke-width="1.4"/>
<rect x="1080" y="84" width="1" height="4" fill="#303030"/><rect x="1082" y="84" width="1" height="4" fill="#303030"/><rect x="1084" y="84" width="1" height="4" fill="#303030"/><rect x="1086" y="84" width="1" height="4" fill="#303030"/><rect x="1088" y="84" width="1" height="4" fill="#303030"/><rect x="1090" y="84" width="1" height="4" fill="#303030"/><rect x="1092" y="84" width="1" height="4" fill="#303030"/><rect x="1094" y="84" width="1" height="4" fill="#303030"/><rect x="1096" y="84" width="1" height="4" fill="#303030"/><rect x="1098" y="84" width="1" height="4" fill="#303030"/>
<rect x="1076.3" y="92.8" width="27.2" height="22.7" rx="3" fill="#393939" stroke="#5b5b5b" stroke-width="0.9"/>
<rect x="1082.4" y="98.8" width="15.8" height="11" fill="#d8d8d8"/>
<rect x="1083.5" y="99.9" width="4" height="4" fill="#808080"/><rect x="1088.4" y="99.9" width="4" height="4" fill="#c6c6c6"/><rect x="1093.3" y="99.9" width="3.8" height="4" fill="#7a7a7a"/>
<rect x="1083.5" y="104.8" width="4" height="4" fill="#7a7a7a"/><rect x="1088.4" y="104.8" width="4" height="4" fill="#8a8a8a"/><rect x="1093.3" y="104.8" width="3.8" height="4" fill="#8f8f8f"/>
<!-- brushes -->
<g fill="#c8c8c8">
<rect x="1086" y="135.2" width="9" height="6.8" rx="0.4"/>
<path d="M1087.6 135 L1085.6 131.5" stroke="#c8c8c8" stroke-width="0.9"/>
<path d="M1083.2 128.5 Q1083.5 125.5 1084.5 125.3 Q1087.5 127.5 1087 131.5 Q1086.2 133 1085 132.5 Q1083 131 1083.2 128.5 Z"/>
<path d="M1089.3 135 L1089.5 129" stroke="#c8c8c8" stroke-width="0.9"/>
<path d="M1088.4 130 Q1088 126.5 1089.5 124.5 Q1091 126.5 1090.6 130 Z"/>
<circle cx="1089.6" cy="123.6" r="1.5"/>
<path d="M1091.5 135 L1093.8 130.5" stroke="#c8c8c8" stroke-width="0.9"/>
<path d="M1092.8 131 Q1093 127 1096 126.3 Q1099 126.5 1099.6 129.3 Q1097 129 1094.3 131.8 Z"/>
<!-- club -->
<circle cx="1090.6" cy="155.6" r="3.8"/><circle cx="1086.2" cy="160.5" r="3.9"/><circle cx="1095.1" cy="160.5" r="3.9"/>
<rect x="1088" y="156" width="5.2" height="5.5"/>
<path d="M1089.9 160 H1091.4 Q1091.5 165.5 1093.8 166.8 H1087.5 Q1089.8 165.5 1089.9 160 Z"/>
<rect x="1084.8" y="166.8" width="11.6" height="1.2"/>
</g>
<rect x="1071" y="176.5" width="37" height="2" fill="#3c3c3c"/>
<rect x="1080" y="181" width="1" height="4" fill="#303030"/><rect x="1082" y="181" width="1" height="4" fill="#303030"/><rect x="1084" y="181" width="1" height="4" fill="#303030"/><rect x="1086" y="181" width="1" height="4" fill="#303030"/><rect x="1088" y="181" width="1" height="4" fill="#303030"/><rect x="1090" y="181" width="1" height="4" fill="#303030"/><rect x="1092" y="181" width="1" height="4" fill="#303030"/><rect x="1094" y="181" width="1" height="4" fill="#303030"/><rect x="1096" y="181" width="1" height="4" fill="#303030"/><rect x="1098" y="181" width="1" height="4" fill="#303030"/>
<circle cx="1090.5" cy="201.2" r="5.6" fill="#c8c8c8"/>
<circle cx="1090.5" cy="201.2" r="7.9" fill="none" stroke="#c8c8c8" stroke-width="1.2" stroke-dasharray="2.1 1.5"/>
<rect x="1085.5" y="222.5" width="13" height="12.6" fill="none" stroke="#cdcdcd" stroke-width="1.1"/>
<rect x="1082.5" y="230.5" width="5.5" height="5.5" fill="#535353" stroke="#cdcdcd" stroke-width="1.1"/>
<rect x="1084.5" y="232.5" width="6" height="5.5" fill="none" stroke="#cdcdcd" stroke-width="1.1"/>
<rect x="1071" y="245.5" width="37" height="2" fill="#3c3c3c"/>
<rect x="1080" y="251" width="1" height="4" fill="#303030"/><rect x="1082" y="251" width="1" height="4" fill="#303030"/><rect x="1084" y="251" width="1" height="4" fill="#303030"/><rect x="1086" y="251" width="1" height="4" fill="#303030"/><rect x="1088" y="251" width="1" height="4" fill="#303030"/><rect x="1090" y="251" width="1" height="4" fill="#303030"/><rect x="1092" y="251" width="1" height="4" fill="#303030"/><rect x="1094" y="251" width="1" height="4" fill="#303030"/><rect x="1096" y="251" width="1" height="4" fill="#303030"/><rect x="1098" y="251" width="1" height="4" fill="#303030"/>
<defs><linearGradient id="dg" x1="0" x2="1"><stop offset="0" stop-color="#111"/><stop offset="1" stop-color="#e0e0e0"/></linearGradient></defs>
<rect x="1082.6" y="264.4" width="16.6" height="11" fill="url(#dg)" stroke="#d0d0d0" stroke-width="1.1"/>
<rect x="1071" y="286.5" width="37" height="2" fill="#3c3c3c"/>
<rect x="1080" y="292" width="1" height="4" fill="#303030"/><rect x="1082" y="292" width="1" height="4" fill="#303030"/><rect x="1084" y="292" width="1" height="4" fill="#303030"/><rect x="1086" y="292" width="1" height="4" fill="#303030"/><rect x="1088" y="292" width="1" height="4" fill="#303030"/><rect x="1090" y="292" width="1" height="4" fill="#303030"/><rect x="1092" y="292" width="1" height="4" fill="#303030"/><rect x="1094" y="292" width="1" height="4" fill="#303030"/><rect x="1096" y="292" width="1" height="4" fill="#303030"/><rect x="1098" y="292" width="1" height="4" fill="#303030"/>
<path d="M1090 304.5 Q1099 304 1100.3 310 Q1100.5 315.5 1094 317.5 Q1089 318.5 1084 316 Q1080.5 313.5 1081.5 310 Q1082.5 308.5 1085 309.5 Q1087.5 310 1087 307.5 Q1086 305 1090 304.5 Z" fill="#c8c8c8"/>
<g fill="#535353"><circle cx="1085" cy="313" r="1.2"/><circle cx="1088.8" cy="315" r="1.3"/><circle cx="1093" cy="314.8" r="1.3"/><circle cx="1096.7" cy="312.5" r="1.2"/><circle cx="1096.5" cy="308.5" r="1.1"/><circle cx="1092.8" cy="307" r="1"/></g>
<rect x="1071" y="327.5" width="37" height="2" fill="#3c3c3c"/>
<rect x="1080" y="333" width="1" height="4" fill="#303030"/><rect x="1082" y="333" width="1" height="4" fill="#303030"/><rect x="1084" y="333" width="1" height="4" fill="#303030"/><rect x="1086" y="333" width="1" height="4" fill="#303030"/><rect x="1088" y="333" width="1" height="4" fill="#303030"/><rect x="1090" y="333" width="1" height="4" fill="#303030"/><rect x="1092" y="333" width="1" height="4" fill="#303030"/><rect x="1094" y="333" width="1" height="4" fill="#303030"/><rect x="1096" y="333" width="1" height="4" fill="#303030"/><rect x="1098" y="333" width="1" height="4" fill="#303030"/>
<path d="M1090.8 344 L1099 349.2 L1090.8 354.4 L1082.6 349.2 Z" fill="#c8c8c8"/>
<path d="M1084.3 352.8 L1090.8 356.9 L1097.3 352.8 L1099 354.3 L1090.8 359.9 L1082.6 354.3 Z" fill="#c8c8c8"/>
<rect x="1071" y="368.5" width="37" height="2" fill="#3c3c3c"/>
</svg>
<!-- red highlight in panel -->
<div class="a" style="left:828.4px;top:177.8px;width:235.2px;height:47.6px;border:4.4px solid #ff0000;border-radius:3px"></div>
<!-- panel bottom -->
<div class="a" style="left:829px;top:498px;width:240px;height:2px;background:#3c3c3c"></div>
<div class="a" style="left:828px;top:506px;width:243px;height:1px;background:#3c3c3c"></div>
<svg style="left:828px;top:478px" width="243" height="30" viewBox="828 478 243 30">
<rect x="939" y="500" width="1" height="4" fill="#303030"/><rect x="941" y="500" width="1" height="4" fill="#303030"/><rect x="943" y="500" width="1" height="4" fill="#303030"/><rect x="945" y="500" width="1" height="4" fill="#303030"/><rect x="947" y="500" width="1" height="4" fill="#303030"/><rect x="949" y="500" width="1" height="4" fill="#303030"/><rect x="951" y="500" width="1" height="4" fill="#303030"/><rect x="953" y="500" width="1" height="4" fill="#303030"/><rect x="955" y="500" width="1" height="4" fill="#303030"/><rect x="957" y="500" width="1" height="4" fill="#303030"/>
<g fill="#cbcbcb">
<rect x="839.8" y="483.5" width="2.2" height="10.5"/><rect x="843.2" y="483.5" width="2.2" height="10.5"/>
<path d="M846.5 484 L848 483.5 L852.8 493.8 L851 494.3 Z"/>
<path d="M853 495 H857 L855 497 Z"/>
<path d="M927.5 485.5 L934 485.5"/>
</g>
<g fill="none" stroke="#cbcbcb" stroke-width="1.1">
<circle cx="871.5" cy="488.5" r="3.6"/><circle cx="871.5" cy="488.5" r="1.3"/>
<path d="M874 486 L876.5 483.5 M874 491 L876 493"/>
</g>
<circle cx="876.7" cy="483.7" r="1.2" fill="#cbcbcb"/><circle cx="876.4" cy="493.2" r="1.4" fill="#cbcbcb"/>
<g fill="none" stroke="#6d6d6d" stroke-width="1.1">
<path d="M893.5 486 V482.7 H903.5 V485"/><path d="M896 487 V485 H905.5 V494 H897.5 V492"/>
<path d="M901 485.5 V488 M903 485.5 V488"/>
</g>
<path d="M892 490.5 H897 M895 488 L898 490.5 L895 493 Z" fill="#6d6d6d" stroke="#6d6d6d" stroke-width="1"/>
<!-- folder+square -->
<path d="M922.8 483.3 H926.8 L928.3 484.8 H934 V487.5 H929 V492.5 H922.8 Z" fill="#cbcbcb"/>
<rect x="930" y="488.3" width="6.6" height="6.2" fill="#535353" stroke="#cbcbcb" stroke-width="1.2"/>
<path d="M938 494.5 H941.5 L939.7 496.3 Z" fill="#cbcbcb"/>
<!-- list (dim) -->
<rect x="952.5" y="483.5" width="10.5" height="10.5" fill="none" stroke="#6d6d6d" stroke-width="1"/>
<path d="M952.5 485.5 H963 M955 488 H956 M957.5 488 H961 M955 490.2 H956 M957.5 490.2 H961 M955 492.3 H956 M957.5 492.3 H961" stroke="#6d6d6d" stroke-width="1"/>
<!-- folder -->
<path d="M977 483.8 Q977 483 978 483 H981.5 L983 484.5 H990 V493 H977 Z" fill="#cbcbcb"/>
<path d="M978.5 484 H981" stroke="#535353" stroke-width="0.7"/>
<!-- new (dim) -->
<rect x="1005.5" y="483.5" width="10.5" height="10.5" fill="none" stroke="#6d6d6d" stroke-width="1"/>
<path d="M1010.7 486 V491.5 M1008 488.7 H1013.5" stroke="#6d6d6d" stroke-width="1"/>
<!-- trash (dim) -->
<path d="M1030 484.5 H1041 M1033.5 484.5 V482.5 H1037.5 V484.5 M1031.5 485 L1032 494 H1039 L1039.5 485 M1034 486.5 V492.5 M1035.5 486.5 V492.5 M1037 486.5 V492.5" fill="none" stroke="#6d6d6d" stroke-width="1"/>
</svg>

</body></html>
